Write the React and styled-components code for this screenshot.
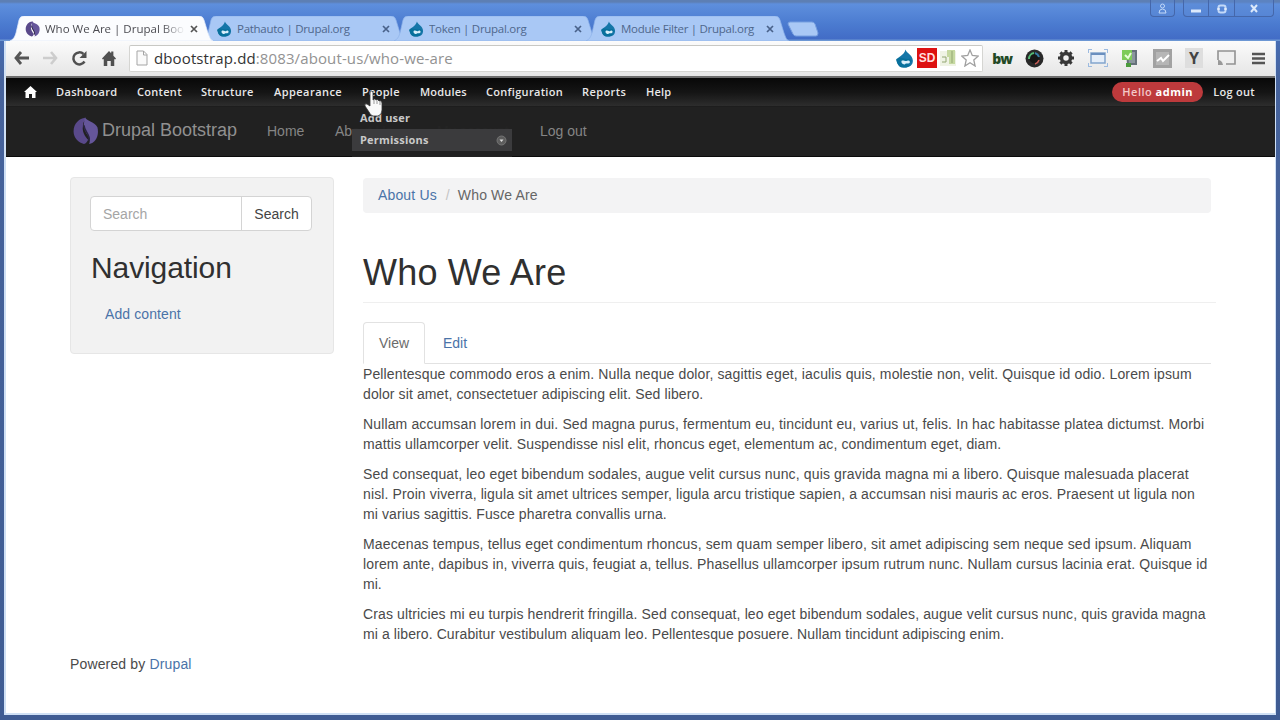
import React from 'react';
import styled, { createGlobalStyle } from 'styled-components';

const Global = createGlobalStyle`
  * { box-sizing: border-box; }
  body { margin: 0; overflow: hidden; font-family: "Liberation Sans", Arial, sans-serif; }
  h1, h2, p { margin: 0; font-weight: 400; }
`;

const BrowserWindow = styled.div`
  width: 1280px; height: 720px; display: flex; flex-direction: column;
  background: linear-gradient(#4676cc, #46639c 80px, #3f5c93);
`;
const TitleBar = styled.div`
  height: 41px; display: flex; align-items: flex-end; padding-left: 10px; flex: none; position: relative;
  background: linear-gradient(#5d7fb4 0, #5d7fb4 2px, #5e8fdd 4px, #4b7bd0 24px, #426cc6 39px, #6c97d4 40px);
`;
const Tab = styled.div`
  width: 203px; height: 25px; flex: none; position: relative; display: flex; align-items: center;
  padding: 1px 15px 0; z-index: ${p => (p.$active ? 2 : 1)}; margin-left: ${p => (p.$active ? 0 : -11)}px;
`;
const TabShape = styled.svg` position: absolute; inset: 0; width: 100%; height: 100%; `;
const TabIcon = styled.svg` position: relative; width: 15px; height: 16px; flex: none; `;
const TabTitle = styled.span`
  position: relative; margin-left: 5px; flex: 1; white-space: nowrap; overflow: hidden;
  font: 11.5px/20px "Open Sans", "Noto Sans", sans-serif; color: ${p => (p.$active ? '#4c4c52' : '#4f678c')};
  letter-spacing: ${p => (p.$active ? 0 : -0.28)}px;
  ${p => p.$active && 'mask-image: linear-gradient(90deg,#000 84%,transparent);'}
`;
const TabClose = styled.svg` position: relative; width: 8px; height: 8px; flex: none; margin-left: 5px; `;
const NewTab = styled.svg` width: 32px; height: 16px; margin: 0 0 4px -2px; `;
const Controls = styled.div`
  position: absolute; top: 0; right: 6px; display: flex; gap: 8px;
`;
const ControlGroup = styled.div`
  display: flex; height: 17px; border: 1px solid #4567aa; border-top: 0; border-radius: 0 0 4px 4px; background: #5c89d466;
`;
const Control = styled.div`
  width: ${p => p.$w}px; display: flex; align-items: center; justify-content: center; padding-top: 1px;
  & + & { border-left: 1px solid #4567aa; }
`;

const Body = styled.div`
  flex: 1; min-height: 0; margin: 0 4px 5px 4px; display: flex; flex-direction: column; background: #fff;
  border: 2px solid #cfe0f5; border-top: 0; border-right-width: 1px;
`;
const Toolbar = styled.div`
  height: 37px; flex: none; display: flex; align-items: center; padding: 0 0 1px 1px;
  background: linear-gradient(#fbfbfb, #e6e6e6); border-bottom: 2px solid #6d6d6d;
`;
const NavButton = styled.div` width: 29px; display: flex; justify-content: center; `;
const Omnibox = styled.div`
  width: 854px; height: 27px; display: flex; align-items: center; background: #fff; border: 1px solid #d5d5d2;
  border-top-color: #c8c8c4; border-radius: 2px; padding: 0 3px 0 6px; margin-left: 6px;
`;
const Url = styled.span`
  flex: 1; margin-left: 6px; font: 15px/22px "Open Sans", sans-serif; color: #929292; letter-spacing: .12px;
  b { font-weight: 400; color: #333; }
`;
const Badge = styled.span`
  width: 20px; height: 20px; margin-right: 3px; background: #dd1111; color: #ffdede; text-align: center;
  font: 700 12px/20px "Liberation Sans", sans-serif;
`;
const Actions = styled.div` display: flex; margin-left: 3px; `;
const Action = styled.div` width: 32px; height: 24px; display: flex; align-items: center; justify-content: center; `;
const BwText = styled.span` font: 800 14px/16px "Open Sans", sans-serif; letter-spacing: -1px; color: #234a26; padding-top: 1px; `;
const YText = styled.span`
  width: 18px; height: 20px; background: #dedede; text-align: center; font: 700 16px/20px "Open Sans", sans-serif; color: #444;
`;

const AdminBar = styled.div`
  height: 29px; flex: none; display: flex; align-items: center; position: relative; color: #e8e8e8;
  background: linear-gradient(#080808, #151515 50%, #2d2d2d 96%, #111);
  font: 600 11px/20px "Open Sans", sans-serif; padding: 0 20px 2px 18px;
`;
const HomeIcon = styled.svg` width: 13px; height: 12px; margin-right: 19px; `;
const AdminItem = styled.span` width: ${p => p.$w}px; white-space: nowrap; letter-spacing: ${p => p.$ls}px; `;
const Hello = styled.span`
  margin-left: auto; width: 91px; height: 20px; border-radius: 10px; background: #bd3a3c; text-align: center;
  color: #f3c9c9; margin-right: 10px; letter-spacing: .5px; b { color: #fff; font-weight: 700; }
`;
const LogOut = styled.span` letter-spacing: .3px; `;
const Dropdown = styled.div`
  position: absolute; left: 346px; top: 29px; width: 160px; height: 50px; background: #222222fa; color: #c9c9c9; z-index: 3;
`;
const DropItem = styled.div`
  height: 22px; display: flex; align-items: center; justify-content: space-between; padding: 0 5px 0 8px;
  font: 700 11px/22px "Open Sans", sans-serif; background: ${p => (p.$on ? '#3b3b3d' : 'transparent')};
  letter-spacing: .2px;
`;
const Cursor = styled.svg` position: absolute; left: 357px; top: 12px; width: 22px; height: 27px; z-index: 4; `;

const SiteNav = styled.div`
  height: 50px; flex: none; display: flex; align-items: center; background: #212121; border-bottom: 1px solid #0b0b0b;
  padding: 0 0 2px 66px; color: #909090;
`;
const Brand = styled.div` display: flex; align-items: center; font-size: 18px; width: 195px; svg { margin-right: 3px; } `;
const SiteLink = styled.span` width: ${p => p.$w}px; font-size: 14px; color: #858585; white-space: nowrap; `;

const Page = styled.div` padding: 20px 0 0 64px; font-size: 14px; line-height: 20px; color: #4a4a4a; `;
const Columns = styled.div` display: flex; gap: 29px; align-items: flex-start; `;
const Well = styled.aside`
  width: 264px; height: 177px; background: #f2f2f2; border: 1px solid #e6e6e6; border-radius: 4px; padding: 18px 19px;
`;
const SearchGroup = styled.div`
  display: flex; width: 222px; height: 35px; background: #fff; border: 1px solid #d4d4d4; border-radius: 4px; line-height: 34px;
`;
const SearchInput = styled.div` width: 150px; padding-left: 12px; color: #a5a5a5; `;
const SearchButton = styled.div` flex: 1; border-left: 1px solid #d4d4d4; text-align: center; color: #444; `;
const BlockTitle = styled.h2` font-size: 30px; line-height: 33px; margin: 20px 0 0 1px; color: #303030; letter-spacing: -.1px; `;
const Link = styled.a` color: #4a73a8; `;
const MenuLink = styled(Link)` display: block; padding: 20px 15px 10px; letter-spacing: .1px; `;
const Main = styled.main` width: 853px; `;
const Breadcrumb = styled.div`
  width: 848px; height: 35px; margin-top: 1px; border-radius: 4px; background: #f3f3f4; padding: 7px 15px; color: #666; letter-spacing: .15px;
  i { font-style: normal; color: #c4c4c4; margin: 0 8px 0 9px; }
`;
const Title = styled.h1`
  font-size: 36px; line-height: 40px; padding: 40px 0 9px; color: #303030; border-bottom: 1px solid #efefef; letter-spacing: .2px;
`;
const Tabs = styled.div` width: 848px; height: 42px; margin-top: 19px; border-bottom: 1px solid #e2e2e2; display: flex; `;
const PageTab = styled.div`
  height: 42px; width: ${p => (p.$on ? 62 : 60)}px; padding: 10px 15px; border-radius: 4px 4px 0 0; color: #6b6b6b;
  ${p => p.$on && 'border: 1px solid #e2e2e2; border-bottom-color: #fff; background: #fff;'}
  ${p => !p.$on && 'padding: 11px 18px; color: #4a73a8;'}
`;
const Paragraph = styled.p` margin-bottom: 10px; `;
const Line = styled.span` display: block; white-space: nowrap; letter-spacing: ${p => p.$ls}px; `;
const Footer = styled.footer` letter-spacing: .15px; `;

const Drop = () => (
  <>
    <path d="M8.5 0C9 3 15 5 15 10c0 4-3 6-7 6s-7-2-7-6c0-4 6-4 7.500-10z" fill="#1576a8" />
    <path d="M0 9c3-4 8 1 12-1l2 2-3 3 2 1-4 2H5C2 15 1 12 0 9z" fill="#08709c" />
    <path d="M5 10c2-1 3 1 5 0s3 1 2 2-3 0-4 1-4-1-3-3z" fill="#d8eefa" />
  </>
);
const Purple = () => (
  <>
    <path d="M12 1C7 1 1 6 1 14c0 6 5 11 10 12 2 0 3-2 4-4-3-3-6-8-5-13 0-3 1-5 3-6z" fill="#59498a" />
    <path d="M12 0c1 4 9 4 12 10 2 8-2 15-8 16 1-3 1-5-1-8-3-4-5-8-4-12z" fill="#65569a" />
    <path d="M11 8c0 6 6 8 5 15" fill="none" stroke="#2b2544" strokeWidth="1.600" />
  </>
);

function BrowserTab({ active, children }) {
  return (
    <Tab $active={active}>
      <TabShape viewBox="0 0 203 25" preserveAspectRatio="none">
        <path d="M0 25C4 23 5 20 6 17L9 4Q10 0 14 0H189Q193 0 194 4L198 17Q200 24 203 25Z"
          fill={active ? '#fbfcfe' : '#a9c8f5'} stroke={active ? '#dfeafa' : '#8db2ea'} strokeWidth=".7" />
      </TabShape>
      <TabIcon viewBox={active ? '0 0 25 27' : '0 0 16 16'}>{active ? <Purple /> : <Drop />}</TabIcon>
      <TabTitle $active={active}>{children}</TabTitle>
      <TabClose viewBox="0 0 8 8"><path d="M1 1l6 6M7 1L1 7" stroke={active ? '#555' : '#49628a'} strokeWidth="1.700" /></TabClose>
    </Tab>
  );
}

const adminItems = [
  ['Dashboard', 81, .35], ['Content', 64, .3], ['Structure', 73, .3], ['Appearance', 88, .45], ['People', 58, .3],
  ['Modules', 66, .2], ['Configuration', 96, .3], ['Reports', 64, .4], ['Help', 40, .2],
];

const paragraphs = [
  [['Pellentesque commodo eros a enim. Nulla neque dolor, sagittis eget, iaculis quis, molestie non, velit. Quisque id odio. Lorem ipsum', .125],
    ['dolor sit amet, consectetuer adipiscing elit. Sed libero.', .1]],
  [['Nullam accumsan lorem in dui. Sed magna purus, fermentum eu, tincidunt eu, varius ut, felis. In hac habitasse platea dictumst. Morbi', .136],
    ['mattis ullamcorper velit. Suspendisse nisl elit, rhoncus eget, elementum ac, condimentum eget, diam.', .11]],
  [['Sed consequat, leo eget bibendum sodales, augue velit cursus nunc, quis gravida magna mi a libero. Quisque malesuada placerat', .144],
    ['nisl. Proin viverra, ligula sit amet ultrices semper, ligula arcu tristique sapien, a accumsan nisi mauris ac eros. Praesent ut ligula non', .119],
    ['mi varius sagittis. Fusce pharetra convallis urna.', .1]],
  [['Maecenas tempus, tellus eget condimentum rhoncus, sem quam semper libero, sit amet adipiscing sem neque sed ipsum. Aliquam', .146],
    ['lorem ante, dapibus in, viverra quis, feugiat a, tellus. Phasellus ullamcorper ipsum rutrum nunc. Nullam cursus lacinia erat. Quisque id', .127],
    ['mi.', 0]],
  [['Cras ultricies mi eu turpis hendrerit fringilla. Sed consequat, leo eget bibendum sodales, augue velit cursus nunc, quis gravida magna', .127],
    ['mi a libero. Curabitur vestibulum aliquam leo. Pellentesque posuere. Nullam tincidunt adipiscing enim.', .1]],
];

export default function App() {
  return (
    <BrowserWindow>
      <Global />
      <TitleBar>
        <BrowserTab active>Who We Are | Drupal Boo</BrowserTab>
        <BrowserTab>Pathauto | Drupal.org</BrowserTab>
        <BrowserTab>Token | Drupal.org</BrowserTab>
        <BrowserTab>Module Filter | Drupal.org</BrowserTab>
        <NewTab viewBox="0 0 32 16"><path d="M3 1h22q2 0 3 2l3 9q0 3-2 3H9q-2 0-3-2L1 3q0-2 2-2z" fill="#a9c8f5" stroke="#779fe0" /></NewTab>
        <Controls>
          <ControlGroup><Control $w={23}>
            <svg width="9" height="11" viewBox="0 0 9 11"><circle cx="4.500" cy="3" r="2" fill="none" stroke="#c3d9f8" /><path d="M1 10q0-4 3.500-4T8 10z" fill="none" stroke="#c3d9f8" /></svg>
          </Control></ControlGroup>
          <ControlGroup>
            <Control $w={24}><svg width="10" height="8"><path d="M0 6h10" stroke="#dce9fb" strokeWidth="3" /></svg></Control>
            <Control $w={26}><svg width="10" height="10"><rect x="1.500" y="1.500" width="7" height="7" rx="2" fill="none" stroke="#c3d9f8" strokeWidth="2" /><path d="M0 5h3M7 5h3" stroke="#fff" /></svg></Control>
            <Control $w={39}><svg width="8" height="9"><path d="M1 1l6 7M7 1L1 8" stroke="#dce9fb" strokeWidth="2" /></svg></Control>
          </ControlGroup>
        </Controls>
      </TitleBar>
      <Body>
        <Toolbar>
          <NavButton><svg width="15" height="14"><path d="M7 1L2 7l5 6M2 7h13" fill="none" stroke="#555" strokeWidth="2.800" /></svg></NavButton>
          <NavButton><svg width="15" height="14"><path d="M8 1l5 6-5 6M13 7H0" fill="none" stroke="#cdcdcd" strokeWidth="2.600" /></svg></NavButton>
          <NavButton><svg width="17" height="17"><path d="M13.500 11.500A6 6 0 1 1 12.500 4" fill="none" stroke="#505050" strokeWidth="2.500" /><path d="M15.500 1v7h-7z" fill="#505050" /></svg></NavButton>
          <NavButton><svg width="14" height="16" viewBox="0 0 16 16" preserveAspectRatio="none"><path d="M0 8.500L8 1l2.500 2.300V1.500H13v4.200L16 8.500l-1 1L14 9v7h-4v-5H6v5H2V9l-1 .5z" fill="#505050" /></svg></NavButton>
          <Omnibox>
            <svg width="12" height="16"><path d="M1 1h6.500L11 4.500V15H1zM7.500 1v4H11" fill="#fafafa" stroke="#a5a5a5" /></svg>
            <Url><b>dbootstrap.dd</b>:8083/about-us/who-we-are</Url>
            <svg width="18" height="19" viewBox="0 0 16 16" style={{ marginRight: 3 }}><Drop /></svg>
            <Badge>SD</Badge>
            <svg width="17" height="18" style={{ marginRight: 4 }}><path d="M0 2h16v15H0z" fill="#eff3e4" /><path d="M7 1h8v14H9V8H7z" fill="#c5d8a0" /><path d="M2 8h4v5H2M12 2v12" fill="none" stroke="#92a672" /></svg>
            <svg width="18" height="18"><path d="M9 1l2.300 5.500 6 .5-4.500 4 1.300 6L9 13.800 3.900 17l1.300-6L.7 7l6-.5z" fill="#fff" stroke="#a0a0a0" strokeWidth="1.300" /></svg>
          </Omnibox>
          <Actions>
            <Action><BwText>bw</BwText></Action>
            <Action><svg width="19" height="19"><circle cx="9.500" cy="9.500" r="9" fill="#292929" /><circle cx="9.500" cy="9.500" r="5" fill="#161616" /><path d="M4 10a6 6 0 0 1 5-6" stroke="#54b974" strokeWidth="2" fill="none" /><path d="M10 4a6 6 0 0 1 4 4" stroke="#377ca5" strokeWidth="2" fill="none" /><path d="M10 15a6 6 0 0 0 4-4" stroke="#c65b54" strokeWidth="1.500" fill="none" /></svg></Action>
            <Action><svg width="16" height="16" viewBox="-8 -8 16 16"><circle r="4.500" fill="none" stroke="#383838" strokeWidth="3.500" /><path d="M0-8v3M0 5v3M-8 0h3M5 0h3M-5.600-5.600l2 2M3.600 3.600l2 2M5.600-5.600l-2 2M-3.600 3.600l-2 2" stroke="#383838" strokeWidth="3" /></svg></Action>
            <Action><svg width="20" height="18"><path d="M3 4h14v10H3z" fill="#e5eef9" stroke="#83a5cd" strokeWidth="1.500" /><path d="M3 5h14" stroke="#6a8fbf" strokeWidth="2" /><path d="M0 4V0h4M16 0h4v4M20 14v4h-4M4 18H0v-4" fill="none" stroke="#9dbbe0" strokeWidth="2" /></svg></Action>
            <Action><svg width="16" height="19"><path d="M5 2h9v13H6z" fill="#8b979e" stroke="#66717b" strokeWidth="2" /><path d="M0 1h10v10H0z" fill="#7ecb58" /><path d="M3 6l3 3 3-5" stroke="#e9ffd9" fill="none" strokeWidth="2" /><path d="M4 14h5v4H4z" fill="#4b9c3c" /></svg></Action>
            <Action><svg width="19" height="19"><path d="M0 0h19v19H0z" fill="#a2a2a2" /><path d="M3 3h13v13H3z" fill="#b6b6b6" /><path d="M4 12l4-3 2 3 6-6" fill="none" stroke="#fff" strokeWidth="2" /></svg></Action>
            <Action><YText>Y</YText></Action>
            <Action><svg width="19" height="16"><path d="M1 10V1h17v13H9" fill="#efefef" stroke="#929292" strokeWidth="1.600" /><path d="M1 10q4 0 5 5H1z" fill="#999" /></svg></Action>
            <Action><svg width="13" height="13"><path d="M0 2h13M0 6.500h13M0 11h13" stroke="#555" strokeWidth="2.500" /></svg></Action>
          </Actions>
        </Toolbar>
        <AdminBar>
          <HomeIcon viewBox="0 0 13 12"><path d="M6.500 0L13 6h-1.500v6H8V8H5v4H1.500V6H0z" fill="#fff" /></HomeIcon>
          {adminItems.map(([t, w, ls]) => <AdminItem key={t} $w={w} $ls={ls}>{t}</AdminItem>)}
          <Hello>Hello <b>admin</b></Hello>
          <LogOut>Log out</LogOut>
          <Dropdown>
            <DropItem>Add user</DropItem>
            <DropItem $on>Permissions
              <svg width="11" height="11"><circle cx="5.500" cy="5.500" r="4.500" fill="#5d5d5d" stroke="#757575" /><path d="M3.500 4.500h4l-2 2.500z" fill="#ddd" /></svg>
            </DropItem>
          </Dropdown>
          <Cursor viewBox="0 0 22 27"><path d="M7 2q2-2 3 0v8q2-2 3 0 2-1 3 1 3-1 3 2v7q0 5-4 6h-5q-3-1-4-4l-4-6q-1-3 2-2l3 2z" fill="#fafafa" stroke="#333" strokeWidth=".8" /><path d="M11 10v4M14 11v3M17 12v3" stroke="#999" /></Cursor>
        </AdminBar>
        <SiteNav>
          <Brand><svg width="27" height="28" viewBox="0 0 25 27"><Purple /></svg>Drupal Bootstrap</Brand>
          <SiteLink $w={68}>Home</SiteLink>
          <SiteLink $w={102}>About Us</SiteLink>
          <SiteLink $w={103}>My account</SiteLink>
          <SiteLink $w={60}>Log out</SiteLink>
        </SiteNav>
        <Page>
          <Columns>
            <Well>
              <SearchGroup><SearchInput>Search</SearchInput><SearchButton>Search</SearchButton></SearchGroup>
              <BlockTitle>Navigation</BlockTitle>
              <MenuLink>Add content</MenuLink>
            </Well>
            <Main>
              <Breadcrumb><Link>About Us</Link><i>/</i>Who We Are</Breadcrumb>
              <Title>Who We Are</Title>
              <Tabs><PageTab $on>View</PageTab><PageTab>Edit</PageTab></Tabs>
              {paragraphs.map((lines, i) => (
                <Paragraph key={i}>{lines.map(([t, ls]) => <Line key={t} $ls={ls}>{t}</Line>)}</Paragraph>
              ))}
            </Main>
          </Columns>
          <Footer>Powered by <Link>Drupal</Link></Footer>
        </Page>
      </Body>
    </BrowserWindow>
  );
}
